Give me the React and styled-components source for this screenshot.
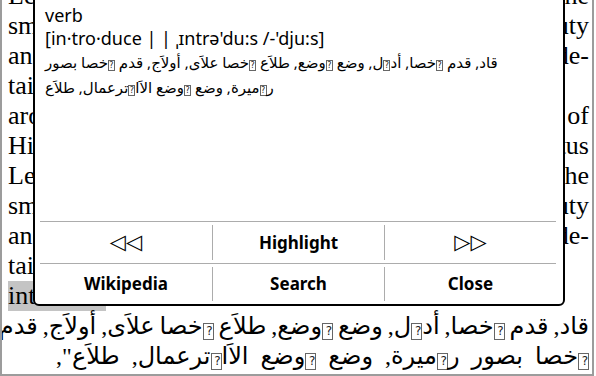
import React from 'react'
import styled, { createGlobalStyle } from 'styled-components'

const GlobalStyle = createGlobalStyle`
	html, body {
		margin: 0;
		padding: 0;
		background: #fff;
	}
	body {
		width: 596px;
		height: 376px;
		overflow: hidden;
	}
`

const Page = styled.div`
	position: relative;
	box-sizing: border-box;
	width: 594px;
	height: 376px;
	border: 2px solid #9c9c9c;
	border-top: none;
	overflow: hidden;
	background: #fff;
`

const BookText = styled.div`
	margin-top: -19px;
	padding: 0 3px 0 6px;
	font-family: 'Liberation Serif', 'DejaVu Sans', serif;
	font-size: 26px;
	line-height: 30px;
	color: #000;
`

const Line = styled.div`
	display: flex;
	justify-content: space-between;
	white-space: nowrap;
`

const Marked = styled.span`
	background: #c4c4c4;
`

const RtlLine = styled.div`
	direction: rtl;
	white-space: nowrap;
	text-align: ${(p) => (p.$full ? 'justify' : 'right')};
	text-align-last: ${(p) => (p.$full ? 'justify' : 'right')};
	font-size: 24px;
	word-spacing: ${(p) => (p.$full ? -1 : 6)}px;
`

const Word = styled.span`
	white-space: nowrap;
`

// missing-glyph box, as the reader draws it
const Tofu = styled.span`
	display: inline-block;
	box-sizing: border-box;
	width: ${(p) => (p.$big ? 11 : 7)}px;
	height: ${(p) => (p.$big ? 17 : 11)}px;
	border: 1px solid #666;
	font-family: 'DejaVu Sans', sans-serif;
	font-size: ${(p) => (p.$big ? 12 : 8)}px;
	line-height: ${(p) => (p.$big ? 15 : 9)}px;
	text-align: center;
	vertical-align: ${(p) => (p.$big ? -1 : 0)}px;
	word-spacing: 0;
	color: #222;
`

const Popup = styled.div`
	position: absolute;
	left: 31px;
	top: -2px;
	box-sizing: border-box;
	width: 532px;
	height: 308px;
	border: 2px solid #000;
	border-radius: 0 0 6px 6px;
	background: #fff;
	display: flex;
	flex-direction: column;
	font-family: 'Noto Sans', 'DejaVu Sans', sans-serif;
	color: #000;
`

const Definition = styled.div`
	flex: 1;
	padding: 4px 24px 0 10px;
	font-size: 18px;
	line-height: 23px;
`

const Translation = styled.div`
	font-size: 15px;
	line-height: 25px;
`

const ButtonTable = styled.div`
	height: 83px;
	margin: 0 7px 0 5px;
	display: flex;
	flex-direction: column;
`

const ButtonRow = styled.div`
	flex: 1;
	display: grid;
	grid-template-columns: repeat(3, 1fr);
	border-top: 1px solid #acacac;
`

const Button = styled.div`
	display: flex;
	align-items: center;
	justify-content: center;
	margin: 3px 0;
	font-size: ${(p) => (p.$glyph ? 21 : 17)}px;
	font-weight: ${(p) => (p.$glyph ? 400 : 700)};
	font-family: ${(p) => (p.$glyph ? "'DejaVu Sans', sans-serif" : "'Noto Sans', sans-serif")};
	& + & {
		border-left: 1px solid #acacac;
	}
`

const lines = [
	['Lewis', 'the'],
	['small', 'beauty'],
	['and', 'de-'],
	['tail', ''],
	['around', 'of'],
	['His', 'status'],
	['Lewis', 'the'],
	['small', 'beauty'],
	['and', 'de-'],
	['tail', ''],
]

const arabicHead = 'قاد, قدم #خصا, أد#ل, وضع #وضع, طلاَع #خصا علاَى, أولاَج, قدم'
const arabicTail = '#خصا بصور ر#ميرة, وضع #وضع الاَا#ترعمال, طلاَع'
const arabic = arabicHead + ' ' + arabicTail

// '#' marks a glyph the font lacks; words holding one are kept whole
const withTofu = (text, big) =>
	text.split(' ').flatMap((word, i) => {
		const node = word.includes('#') ? (
			<Word key={i}>
				{word.split('#').flatMap((part, j) => (j === 0 ? [part] : [<Tofu key={j} $big={big}>?</Tofu>, part]))}
			</Word>
		) : (
			word
		)
		return i === 0 ? [node] : [' ', node]
	})

const App = () => {
	return (
		<Page>
			<GlobalStyle />
			<BookText>
				{lines.map(([left, right], i) => (
					<Line key={i}>
						<span>{left}</span>
						<span>{right}</span>
					</Line>
				))}
				<Line>
					<Marked>introduce</Marked>
				</Line>
				<RtlLine $full>{withTofu(arabicHead, true)}</RtlLine>
				<RtlLine>{withTofu(arabicTail, true)}",</RtlLine>
			</BookText>

			<Popup>
				<Definition>
					<div>verb</div>
					<div>[in·tro·duce | | ˌɪntrə'du:s /-'dju:s]</div>
					<Translation>{withTofu(arabic, false)}</Translation>
				</Definition>
				<ButtonTable>
					<ButtonRow>
						<Button $glyph>◁◁</Button>
						<Button>Highlight</Button>
						<Button $glyph>▷▷</Button>
					</ButtonRow>
					<ButtonRow>
						<Button>Wikipedia</Button>
						<Button>Search</Button>
						<Button>Close</Button>
					</ButtonRow>
				</ButtonTable>
			</Popup>
		</Page>
	)
}

export default App
